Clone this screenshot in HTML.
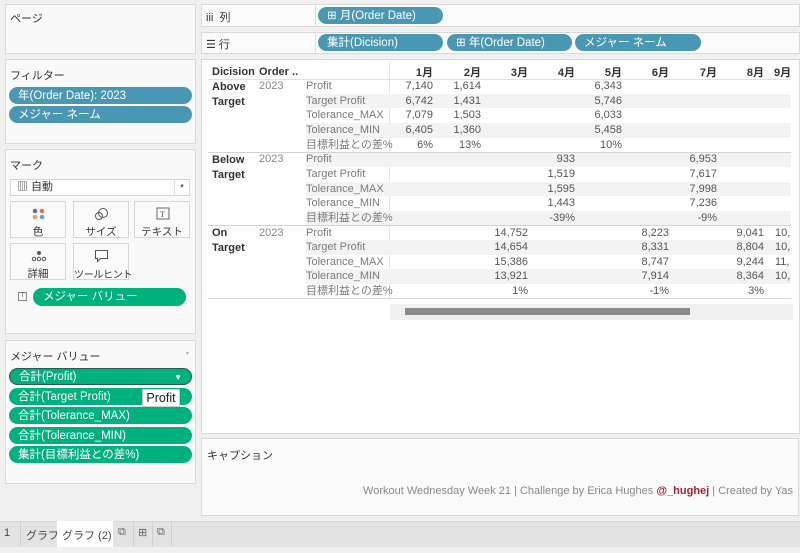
<!DOCTYPE html>
<html><head><meta charset="utf-8">
<style>
*{box-sizing:border-box;margin:0;padding:0}
body{width:800px;height:553px;overflow:hidden;background:#f0f0f0;font-family:"Liberation Sans","Noto Sans CJK JP",sans-serif;font-size:12px;color:#333;position:relative}
div{white-space:nowrap}
.a{position:absolute}
.panel{position:absolute;background:#f9f9f9;border:1px solid #d9d9d9}
.t{position:absolute;font-size:11px;color:#333}
.pill{position:absolute;height:17px;border-radius:9px;color:#fff;font-size:11.5px;line-height:15px;padding-top:2px;padding-left:9px;white-space:nowrap}
.b{background:#4a97b3}
.g{background:#00b07d}
.btn{position:absolute;width:56px;height:37px;border:1px solid #d6d6d6;background:#fafafa;font-size:10.5px;text-align:center}
.btn .l{position:absolute;left:0;right:0;top:22px}
.tb{font-size:11px}
.r{position:absolute;left:0;width:791px;height:14.65px;line-height:14.65px}
.sh{background:#f3f3f3;position:absolute;left:306px;width:485px;top:0;height:14.65px}
.n{position:absolute;left:306px;color:#7a7a7a}
.v{position:absolute;color:#555}
.h{position:absolute;font-weight:bold;color:#333}
.m{top:64px}
</style></head><body>

<div class="panel" style="left:5px;top:4px;width:191px;height:50px"></div>
<div class="t" style="left:10px;top:10px">ページ</div>

<div class="panel" style="left:201px;top:4px;width:599px;height:23px;background:#fbfbfb"></div>
<div class="a" style="left:315px;top:4px;width:1px;height:23px;background:#ddd"></div>
<div class="t" style="left:206px;top:9px">iii&nbsp; 列</div>
<div class="pill b" style="left:318px;top:7px;width:125px">⊞ 月(Order Date)</div>
<div class="panel" style="left:201px;top:32px;width:599px;height:22px;background:#fbfbfb"></div>
<div class="a" style="left:315px;top:32px;width:1px;height:22px;background:#ddd"></div>
<div class="t" style="left:206px;top:36px">☰ 行</div>
<div class="pill b" style="left:318px;top:34px;width:125px">集計(Dicision)</div>
<div class="pill b" style="left:447px;top:34px;width:125px">⊞ 年(Order Date)</div>
<div class="pill b" style="left:575px;top:34px;width:126px">メジャー ネーム</div>

<div class="panel" style="left:5px;top:59px;width:191px;height:85px"></div>
<div class="t" style="left:10px;top:67px">フィルター</div>
<div class="pill b" style="left:9px;top:87px;width:183px">年(Order Date): 2023</div>
<div class="pill b" style="left:9px;top:106px;width:183px">メジャー ネーム</div>

<div class="panel" style="left:5px;top:149px;width:191px;height:185px"></div>
<div class="t" style="left:10px;top:157px">マーク</div>
<div class="a" style="left:10px;top:179px;width:180px;height:17px;border:1px solid #d6d6d6;background:#fff;font-size:11px;line-height:15px;padding-left:6px">▥ 自動</div>
<div class="a" style="left:174px;top:179px;width:1px;height:17px;background:#ddd"></div>
<div class="a" style="left:179px;top:184px;font-size:6px;color:#555">▼</div>
<div class="btn" style="left:10px;top:201px"><svg class="a" style="left:21px;top:6px" width="14" height="12"><circle cx="3" cy="3" r="2.3" fill="#6a6aa0"/><circle cx="10" cy="3" r="2.3" fill="#d86a6a"/><circle cx="3" cy="9" r="2.3" fill="#e0a060"/><circle cx="10" cy="9" r="2.3" fill="#6aa0d0"/></svg><div class="l">色</div></div>
<div class="btn" style="left:73px;top:201px"><svg class="a" style="left:20px;top:5px" width="15" height="14" fill="none" stroke="#555"><circle cx="9" cy="6" r="4.5"/><circle cx="5" cy="9" r="3.5"/></svg><div class="l">サイズ</div></div>
<div class="btn" style="left:134px;top:201px"><svg class="a" style="left:21px;top:5px" width="14" height="13"><rect x="1" y="1" width="12" height="11" fill="none" stroke="#666"/><text x="4" y="10" font-size="8" fill="#555" font-family="Liberation Serif">T</text></svg><div class="l">テキスト</div></div>
<div class="btn" style="left:10px;top:243px"><svg class="a" style="left:20px;top:6px" width="16" height="12" fill="none" stroke="#555"><circle cx="8" cy="3" r="1.5" fill="#555"/><circle cx="3" cy="9" r="1.7"/><circle cx="8" cy="9" r="1.7"/><circle cx="13" cy="9" r="1.7"/></svg><div class="l">詳細</div></div>
<div class="btn" style="left:73px;top:243px"><svg class="a" style="left:20px;top:5px" width="15" height="14" fill="none" stroke="#555"><path d="M1.5 1.5h12v8h-7l-3 3v-3h-2z"/></svg><div class="l" style="font-size:10px;letter-spacing:-0.3px">ツールヒント</div></div>
<div class="a" style="left:18px;top:292px;width:9px;height:9px;border:1px solid #888;font-size:6px;line-height:7px;text-align:center;color:#555">T</div>
<div class="pill g" style="left:33px;top:288px;width:153px;height:18px;padding-left:10px">メジャー バリュー</div>

<div class="panel" style="left:5px;top:340px;width:191px;height:144px"></div>
<div class="t" style="left:10px;top:348px">メジャー バリュー</div>
<div class="a" style="left:185px;top:351px;font-size:5px;color:#aaa">▼</div>
<div class="pill g" style="left:9px;top:368px;width:183px;border:1px solid #2d5a4a;padding-top:1px">合計(Profit)<span class="a" style="right:9px;top:1px;font-size:8px">▼</span></div>
<div class="pill g" style="left:9px;top:388px;width:183px">合計(Target Profit)</div>
<div class="pill g" style="left:9px;top:407px;width:183px">合計(Tolerance_MAX)</div>
<div class="pill g" style="left:9px;top:427px;width:183px">合計(Tolerance_MIN)</div>
<div class="pill g" style="left:9px;top:446px;width:183px">集計(目標利益との差%)</div>
<div class="a" style="left:142px;top:389px;width:38px;height:18px;background:#fff;border:1px solid #ccc;font-size:12.5px;line-height:16px;text-align:center;color:#222">Profit</div>

<div class="panel" style="left:201px;top:59px;width:599px;height:375px;background:#fff"></div>
<div class="a tb" style="left:0;top:0;width:791px;height:320px;overflow:hidden">
  <div class="h" style="left:212px;top:66px">Dicision</div>
  <div class="h" style="left:259px;top:66px">Order ..</div>
  <div class="h m" style="right:358px">1月</div>
  <div class="h m" style="right:310px">2月</div>
  <div class="h m" style="right:263px">3月</div>
  <div class="h m" style="right:216px">4月</div>
  <div class="h m" style="right:169px">5月</div>
  <div class="h m" style="right:122px">6月</div>
  <div class="h m" style="right:74px">7月</div>
  <div class="h m" style="right:27px">8月</div>
  <div class="h m" style="left:774px">9月</div>
  <div class="a" style="left:208px;top:79px;width:583px;height:1px;background:#e0e0e0"></div>
  <div class="a" style="left:389px;top:62px;width:1px;height:237px;background:#e4e4e4"></div>

  <div class="r" style="top:79px"><div class="n">Profit</div><div class="v" style="right:358px">7,140</div><div class="v" style="right:310px">1,614</div><div class="v" style="right:169px">6,343</div></div>
  <div class="r" style="top:93.65px"><div class="sh"></div><div class="n">Target Profit</div><div class="v" style="right:358px">6,742</div><div class="v" style="right:310px">1,431</div><div class="v" style="right:169px">5,746</div></div>
  <div class="r" style="top:108.3px"><div class="n">Tolerance_MAX</div><div class="v" style="right:358px">7,079</div><div class="v" style="right:310px">1,503</div><div class="v" style="right:169px">6,033</div></div>
  <div class="r" style="top:122.95px"><div class="sh"></div><div class="n">Tolerance_MIN</div><div class="v" style="right:358px">6,405</div><div class="v" style="right:310px">1,360</div><div class="v" style="right:169px">5,458</div></div>
  <div class="r" style="top:137.6px"><div class="n">目標利益との差%</div><div class="v" style="right:358px">6%</div><div class="v" style="right:310px">13%</div><div class="v" style="right:169px">10%</div></div>

  <div class="r" style="top:152.25px"><div class="sh"></div><div class="n">Profit</div><div class="v" style="right:216px">933</div><div class="v" style="right:74px">6,953</div></div>
  <div class="r" style="top:166.9px"><div class="n">Target Profit</div><div class="v" style="right:216px">1,519</div><div class="v" style="right:74px">7,617</div></div>
  <div class="r" style="top:181.55px"><div class="sh"></div><div class="n">Tolerance_MAX</div><div class="v" style="right:216px">1,595</div><div class="v" style="right:74px">7,998</div></div>
  <div class="r" style="top:196.2px"><div class="n">Tolerance_MIN</div><div class="v" style="right:216px">1,443</div><div class="v" style="right:74px">7,236</div></div>
  <div class="r" style="top:210.85px"><div class="sh"></div><div class="n">目標利益との差%</div><div class="v" style="right:216px">-39%</div><div class="v" style="right:74px">-9%</div></div>

  <div class="r" style="top:225.5px"><div class="n">Profit</div><div class="v" style="right:263px">14,752</div><div class="v" style="right:122px">8,223</div><div class="v" style="right:27px">9,041</div><div class="v" style="left:775px">10,</div></div>
  <div class="r" style="top:240.15px"><div class="sh"></div><div class="n">Target Profit</div><div class="v" style="right:263px">14,654</div><div class="v" style="right:122px">8,331</div><div class="v" style="right:27px">8,804</div><div class="v" style="left:775px">10,</div></div>
  <div class="r" style="top:254.8px"><div class="n">Tolerance_MAX</div><div class="v" style="right:263px">15,386</div><div class="v" style="right:122px">8,747</div><div class="v" style="right:27px">9,244</div><div class="v" style="left:775px">11,</div></div>
  <div class="r" style="top:269.45px"><div class="sh"></div><div class="n">Tolerance_MIN</div><div class="v" style="right:263px">13,921</div><div class="v" style="right:122px">7,914</div><div class="v" style="right:27px">8,364</div><div class="v" style="left:775px">10,</div></div>
  <div class="r" style="top:284.1px"><div class="n">目標利益との差%</div><div class="v" style="right:263px">1%</div><div class="v" style="right:122px">-1%</div><div class="v" style="right:27px">3%</div></div>

  <div class="h" style="left:212px;top:80px;line-height:14.65px">Above<br>Target</div>
  <div class="a" style="left:259px;top:79px;line-height:14.65px;color:#888">2023</div>
  <div class="h" style="left:212px;top:153px;line-height:14.65px">Below<br>Target</div>
  <div class="a" style="left:259px;top:152.25px;line-height:14.65px;color:#888">2023</div>
  <div class="h" style="left:212px;top:226px;line-height:14.65px">On<br>Target</div>
  <div class="a" style="left:259px;top:225.5px;line-height:14.65px;color:#888">2023</div>

  <div class="a" style="left:208px;top:152px;width:583px;height:1px;background:#d4d4d4"></div>
  <div class="a" style="left:208px;top:225px;width:583px;height:1px;background:#d4d4d4"></div>
  <div class="a" style="left:208px;top:298px;width:583px;height:1px;background:#d4d4d4"></div>
</div>
<div class="a" style="left:390px;top:304px;width:403px;height:16px;background:#f0f0f0"></div>
<div class="a" style="left:405px;top:308px;width:285px;height:7px;background:#8a8a8a"></div>

<div class="panel" style="left:201px;top:438px;width:598px;height:78px;background:#fafafa"></div>
<div class="t" style="left:207px;top:447px">キャプション</div>
<div class="a" style="right:7px;top:485px;font-size:11px;color:#888;white-space:nowrap">Workout Wednesday Week 21 | Challenge by Erica Hughes <b style="color:#9b2335">@_hughej</b> | Created by Yas</div>

<div class="a" style="left:0;top:521px;width:800px;height:26px;background:#e3e3e3;border-top:1px solid #d8d8d8"></div>
<div class="a" style="left:0;top:547px;width:800px;height:6px;background:#f0f0f0"></div>
<div class="a" style="left:4px;top:527px;font-size:11px;color:#444">1</div>
<div class="a" style="left:20px;top:521px;width:1px;height:26px;background:#d0d0d0"></div>
<div class="a" style="left:26px;top:527px;font-size:11px;color:#444">グラフ</div>
<div class="a" style="left:57px;top:521px;width:56px;height:26px;background:#fff"></div>
<div class="a" style="left:62px;top:527px;font-size:11px;color:#444">グラフ (2)</div>
<div class="a" style="left:118px;top:526px;font-size:11px;color:#666">⧉</div>
<div class="a" style="left:133px;top:521px;width:1px;height:26px;background:#d0d0d0"></div>
<div class="a" style="left:138px;top:526px;font-size:11px;color:#666">⊞</div>
<div class="a" style="left:152px;top:521px;width:1px;height:26px;background:#d0d0d0"></div>
<div class="a" style="left:157px;top:526px;font-size:11px;color:#666">⧉</div>
<div class="a" style="left:171px;top:521px;width:1px;height:26px;background:#d0d0d0"></div>
</body></html>
